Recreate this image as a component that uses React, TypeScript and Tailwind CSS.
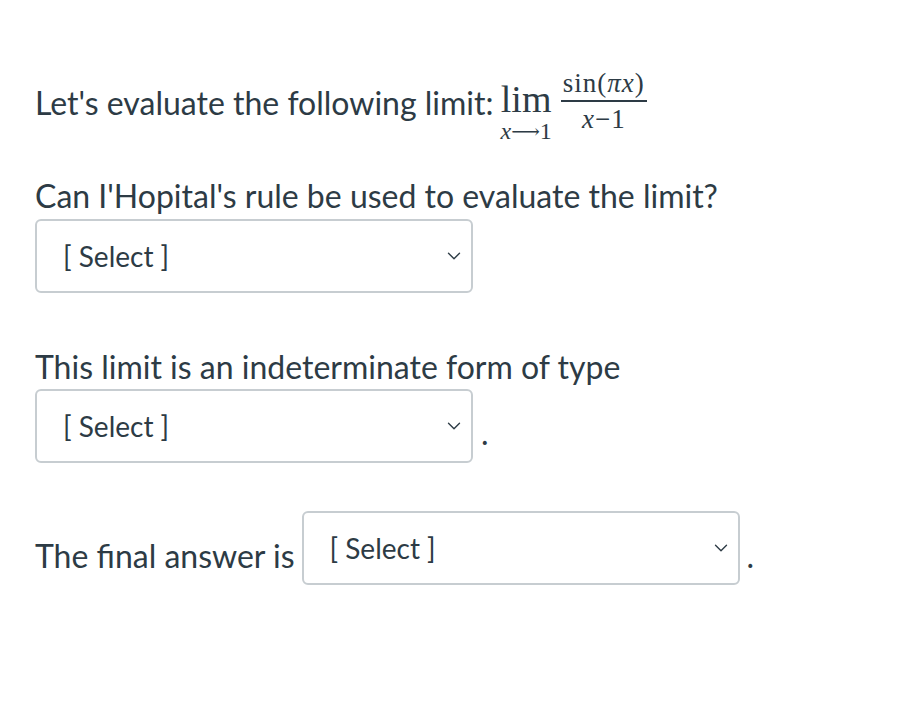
import { ChevronDown } from "lucide-react";

function SelectBox({ className = "" }: { className?: string }) {
  return (
    <div
      className={`flex h-[74px] w-[438px] shrink-0 items-center justify-between rounded-[6px] border-2 border-[#c7cdd1] bg-white pl-[26px] pr-[6px] ${className}`}
    >
      <span className="text-[28px] leading-[34px] text-[#2d3b45]">[ Select ]</span>
      <ChevronDown className="h-[22px] w-[22px] text-[#2d3b45]" strokeWidth={1.5} />
    </div>
  );
}

export default function App() {
  const math = { fontFamily: '"Liberation Serif", "DejaVu Serif", serif' };
  return (
    <div
      className="min-h-screen bg-white pl-[35px] pt-[66px] text-[#2d3b45]"
      style={{ fontFamily: 'Lato, "Noto Sans", sans-serif' }}
    >
      {/* limit statement */}
      <div className="flex items-start">
        <span className="mt-[18px] text-[32px] leading-[38px]">Let's evaluate the following limit:</span>
        <span className="ml-[7px] flex flex-col items-center" style={math}>
          <span className="mt-[14px] text-[38px] leading-[38px]">lim</span>
          <span className="flex items-center text-[24px] leading-[26px]">
            <i>x</i>
            <span className="text-[20px]">⟶</span>1
          </span>
        </span>
        <span className="ml-[9px] flex flex-col items-center" style={math}>
          <span className="px-[2px] text-[27px] leading-[34px] tracking-[1px]">
            sin(<i>πx</i>)
          </span>
          <span className="h-[2px] w-full bg-[#2d3b45]" />
          <span className="mt-[2px] text-[27px] leading-[30px] tracking-[1px]">
            <i>x</i>−1
          </span>
        </span>
      </div>

      <div className="mt-[33px] text-[32px] leading-[38px]">
        Can I'Hopital's rule be used to evaluate the limit?
      </div>
      <SelectBox className="mt-[4px]" />

      <div className="mt-[55px] text-[32px] leading-[38px]">This limit is an indeterminate form of type</div>
      <div className="mt-[3px] flex items-end">
        <SelectBox />
        <span className="mb-[11px] ml-[8px] text-[32px] leading-[38px]">.</span>
      </div>

      <div className="mt-[48px] flex items-center">
        <span className="mt-[16px] text-[32px] leading-[38px]">The final answer is</span>
        <SelectBox className="ml-[7px]" />
        <span className="ml-[7px] mt-[16px] text-[32px] leading-[38px]">.</span>
      </div>
    </div>
  );
}
